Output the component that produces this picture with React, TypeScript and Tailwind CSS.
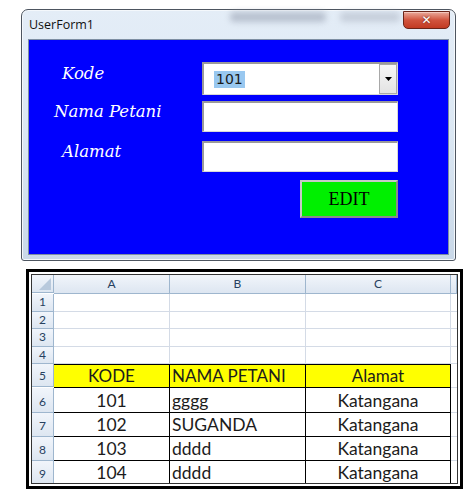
import React from "react";

const headerCell =
  "flex items-center justify-center border-r border-b border-[#9eb6ce] bg-gradient-to-b from-[#f1f5fb] to-[#dde6f1] text-[12px] text-[#27415f]";

const field =
  "h-[31px] w-[196px] border-l-2 border-t-2 border-l-[#9a9a9a] border-t-[#9a9a9a] border-b border-r border-b-[#d8d8d8] border-r-[#d8d8d8] bg-white";

const label = "font-['DejaVu_Serif',serif] text-[16.5px] italic text-white -translate-y-[4px]";

const rows = ["1", "2", "3", "4"];

const data = [
  { n: "6", a: "101", b: "gggg", c: "Katangana", h: "h-[25px]" },
  { n: "7", a: "102", b: "SUGANDA", c: "Katangana", h: "h-[24px]" },
  { n: "8", a: "103", b: "dddd", c: "Katangana", h: "h-[24px]" },
  { n: "9", a: "104", b: "dddd", c: "Katangana", h: "h-[24px]" },
];

function UserForm() {
  return (
    <div className="relative ml-[21px] mt-[8px] h-[252px] w-[435px] rounded-t-[7px] rounded-b-[3px] border border-[#4d5560] bg-gradient-to-b from-[#e4edf7] via-[#dbe7f3] to-[#c9d8e8] shadow-[inset_0_0_0_1px_#f4f8fc]">
      {/* blurred windows behind the glass */}
      <div className="absolute left-[208px] top-[2px] h-[10px] w-[96px] rounded bg-[#9aa3b4] opacity-60 blur-[3px]" />
      <div className="absolute left-[318px] top-[2px] h-[10px] w-[60px] rounded bg-[#a9b1bf] opacity-50 blur-[3px]" />

      <div className="flex h-[29px] items-center pl-[7px]">
        <span className="relative pt-[2px] font-['Open_Sans',sans-serif] text-[12.5px] text-[#111]">
          UserForm1
        </span>
      </div>

      <div className="absolute right-[5px] top-[1px] flex h-[18px] w-[47px] items-center justify-center rounded-b-[5px] border border-[#6b2418] bg-gradient-to-b from-[#e9a99b] via-[#d1543e] to-[#c23a22] shadow-[inset_0_1px_0_#f4c6bb]">
        <span className="font-['DejaVu_Sans',sans-serif] text-[12px] font-bold leading-none text-white [text-shadow:0_0_2px_#5a1a10]">
          ✕
        </span>
      </div>

      <div className="mx-[6px] h-[216px] border border-[#7d8ea3] bg-[#0000fe] pt-[22px]">
        <div className="flex h-[33px] items-center">
          <span className={label + " w-[173px] pl-[33px]"}>Kode</span>
          <div className="flex h-[33px] w-[196px] items-center border-l-2 border-t-2 border-l-[#9a9a9a] border-t-[#9a9a9a] border-b border-r border-b-[#d8d8d8] border-r-[#d8d8d8] bg-white">
            <div className="flex flex-1 items-center pl-[10px]">
              <span className="bg-[#99c8f0] px-[2px] font-['DejaVu_Sans',sans-serif] text-[14px] leading-[17px] text-[#1a1a1a]">
                101
              </span>
            </div>
            <div className="flex h-[30px] w-[18px] items-center justify-center border border-[#a8a8a8] bg-gradient-to-b from-[#f7f7f7] to-[#e3e3e3]">
              <svg width="7" height="4" viewBox="0 0 7 4">
                <path d="M0 0h7L3.5 4z" fill="#000" />
              </svg>
            </div>
          </div>
        </div>

        <div className="mt-[6px] flex h-[31px] items-center">
          <span className={label + " w-[173px] pl-[25px]"}>Nama Petani</span>
          <div className={field} />
        </div>

        <div className="mt-[9px] flex h-[31px] items-center">
          <span className={label + " w-[173px] pl-[33px]"}>Alamat</span>
          <div className={field} />
        </div>

        <div className="mt-[8px] flex pl-[271px]">
          <div className="flex h-[38px] w-[98px] items-center justify-center border-2 border-t-[#c8c8c8] border-l-[#c8c8c8] border-b-[#8a8a8a] border-r-[#8a8a8a] bg-[#00f000]">
            <span className="font-['Liberation_Serif',serif] text-[18px] text-black">EDIT</span>
          </div>
        </div>
      </div>
    </div>
  );
}

function Sheet() {
  return (
    <div className="ml-[26px] mt-[8px] h-[220px] w-[437px] border-[3px] border-black bg-white p-[2px]">
      <div className="h-full w-full overflow-hidden border border-[#333] font-['Lato',sans-serif]">
        <div className="grid grid-cols-[22px_116px_136px_145px_1fr]">
          {/* column headers */}
          <div className={headerCell + " relative h-[18px]"}>
            <svg className="absolute bottom-[2px] right-[2px]" width="12" height="12" viewBox="0 0 12 12">
              <path d="M12 0v12H0z" fill="#b8c9dc" />
            </svg>
          </div>
          <div className={headerCell}>A</div>
          <div className={headerCell}>B</div>
          <div className={headerCell}>C</div>
          <div className={headerCell} />

          {rows.map((n) => (
            <React.Fragment key={n}>
              <div className={headerCell + " h-[17.5px]"}>{n}</div>
              <div className="border-r border-b border-[#d4dbe6]" />
              <div className="border-r border-b border-[#d4dbe6]" />
              <div className="border-r border-b border-[#d4dbe6]" />
              <div className="border-b border-[#d4dbe6]" />
            </React.Fragment>
          ))}

          <div className={headerCell + " h-[23px] items-end pb-[1px]"}>5</div>
          <div className="flex items-end justify-center border-r border-b border-t border-black bg-[#ffff00] text-[17px] leading-[22px] text-[#1c1c1c]">
            KODE
          </div>
          <div className="flex items-end border-r border-b border-t border-black bg-[#ffff00] pl-[2px] text-[17px] leading-[22px] text-[#1c1c1c]">
            NAMA PETANI
          </div>
          <div className="flex items-end justify-center border-r border-b border-t border-black bg-[#ffff00] text-[17px] leading-[22px] text-[#1c1c1c]">
            Alamat
          </div>
          <div className="border-b border-[#d4dbe6]" />

          {data.map((r) => (
            <React.Fragment key={r.n}>
              <div className={headerCell + " " + r.h + " items-end pb-[1px]"}>{r.n}</div>
              <div className="flex items-end justify-center border-r border-b border-black text-[17.5px] leading-[23px] text-[#1c1c1c]">
                {r.a}
              </div>
              <div className="flex items-end border-r border-b border-black pl-[2px] text-[17.5px] leading-[23px] text-[#1c1c1c]">
                {r.b}
              </div>
              <div className="flex items-end justify-center border-r border-b border-black text-[17.5px] leading-[23px] text-[#1c1c1c]">
                {r.c}
              </div>
              <div className="border-b border-[#d4dbe6]" />
            </React.Fragment>
          ))}
        </div>
      </div>
    </div>
  );
}

export default function App() {
  return (
    <div className="h-[500px] w-[474px] overflow-hidden bg-white">
      <div className="pt-px">
        <UserForm />
      </div>
      <Sheet />
    </div>
  );
}
